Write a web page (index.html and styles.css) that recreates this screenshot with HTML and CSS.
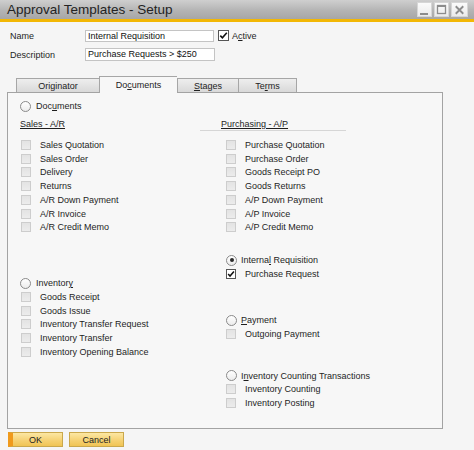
FILE: index.html
```html
<!DOCTYPE html>
<html>
<head>
<meta charset="utf-8">
<link rel="stylesheet" href="styles.css">
</head>
<body>
<div class="window">
  <div class="titlebar">
    <span class="title">Approval Templates - Setup</span>
    <div class="winbtns">
      <span class="wbtn"><svg width="13" height="12" viewBox="0 0 13 12"><rect x="2" y="9" width="8" height="2" fill="#8c8c8c"/></svg></span>
      <span class="wbtn"><svg width="13" height="12" viewBox="0 0 13 12"><rect x="2.5" y="1.5" width="8" height="8" fill="none" stroke="#8c8c8c" stroke-width="1.3"/><rect x="2" y="1" width="9" height="2" fill="#8c8c8c"/></svg></span>
      <span class="wbtn wclose"><svg width="16" height="12" viewBox="0 0 16 12"><path d="M4 2 L12 10 M12 2 L4 10" stroke="#8c8c8c" stroke-width="2"/></svg></span>
    </div>
  </div>

  <div class="form">
    <div class="field-row">
      <span class="label">Name</span>
      <div class="input input-name">Internal Requisition</div>
      <span class="chkbig"><svg width="9" height="9" viewBox="0 0 9 9"><path d="M1.3 4.6 L3.4 6.8 L7.8 1.8" fill="none" stroke="#111" stroke-width="1.6"/></svg></span>
      <span class="active-label">A<u>c</u>tive</span>
    </div>
    <div class="field-row desc-row">
      <span class="label">Description</span>
      <div class="input input-desc">Purchase Requests &gt; $250</div>
    </div>
  </div>

  <div class="tabs">
    <div class="tab tab-orig">Originator</div>
    <div class="tab tab-docs active">Do<u>c</u>uments</div>
    <div class="tab tab-stages"><u>S</u>tages</div>
    <div class="tab tab-terms">Te<u>r</u>ms</div>
  </div>

  <div class="panel">
    <div class="row radio-row">
      <span class="radio"></span><span>Doc<u>u</u>ments</span>
    </div>
    <div class="cols">
      <div class="col col-left">
        <div class="header"><u>Sales - A/R</u></div>
        <div class="list">
          <div class="row"><span class="chk"></span>Sales Quotation</div>
          <div class="row"><span class="chk"></span>Sales Order</div>
          <div class="row"><span class="chk"></span>Delivery</div>
          <div class="row"><span class="chk"></span>Returns</div>
          <div class="row"><span class="chk"></span>A/R Down Payment</div>
          <div class="row"><span class="chk"></span>A/R Invoice</div>
          <div class="row"><span class="chk"></span>A/R Credit Memo</div>
        </div>
        <div class="section sec-inventory">
          <div class="row radio-row"><span class="radio"></span><span>Inventor<u>y</u></span></div>
          <div class="row"><span class="chk"></span>Goods Receipt</div>
          <div class="row"><span class="chk"></span>Goods Issue</div>
          <div class="row"><span class="chk"></span>Inventory Transfer Request</div>
          <div class="row"><span class="chk"></span>Inventory Transfer</div>
          <div class="row"><span class="chk"></span>Inventory Opening Balance</div>
        </div>
      </div>
      <div class="col col-right">
        <div class="header header-line"><u>Purchasing - A/P</u></div>
        <div class="list">
          <div class="row"><span class="chk"></span>Purchase Quotation</div>
          <div class="row"><span class="chk"></span>Purchase Order</div>
          <div class="row"><span class="chk"></span>Goods Receipt PO</div>
          <div class="row"><span class="chk"></span>Goods Returns</div>
          <div class="row"><span class="chk"></span>A/P Down Payment</div>
          <div class="row"><span class="chk"></span>A/P Invoice</div>
          <div class="row"><span class="chk"></span>A/P Credit Memo</div>
        </div>
        <div class="section sec-ireq">
          <div class="row radio-row"><span class="radio selected"></span><span>Interna<u>l</u> Requisition</span></div>
          <div class="row"><span class="chk checked"><svg width="8" height="8" viewBox="0 0 9 9"><path d="M1.3 4.6 L3.4 6.8 L7.8 1.8" fill="none" stroke="#111" stroke-width="1.7"/></svg></span>Purchase Request</div>
        </div>
        <div class="section sec-pay">
          <div class="row radio-row"><span class="radio"></span><span><u>P</u>ayment</span></div>
          <div class="row"><span class="chk"></span>Outgoing Payment</div>
        </div>
        <div class="section sec-count">
          <div class="row radio-row"><span class="radio"></span><span>I<u>n</u>ventory Counting Transactions</span></div>
          <div class="row"><span class="chk"></span>Inventory Counting</div>
          <div class="row"><span class="chk"></span>Inventory Posting</div>
        </div>
      </div>
    </div>
  </div>

  <div class="buttons">
    <div class="btn btn-ok">OK</div>
    <div class="btn">Cancel</div>
  </div>
</div>
</body>
</html>
```

FILE: styles.css
```css
* { box-sizing: border-box; }
html, body { margin: 0; padding: 0; }
body {
  width: 474px;
  height: 450px;
  background: #f5f5f5;
  font-family: "Liberation Sans", Arial, sans-serif;
  font-size: 9px;
  color: #1e1e1e;
  overflow: hidden;
}
.window { width: 474px; height: 450px; display: flex; flex-direction: column; }

.titlebar {
  height: 22px;
  display: flex;
  align-items: flex-start;
  justify-content: space-between;
  background: linear-gradient(#cfcfcf, #b4b4b4 55%, #a6a6a6);
  border-bottom: 3px solid #f2b705;
}
.title {
  font-size: 13.5px;
  color: #232323;
  padding-left: 7px;
  line-height: 19px;
}
.winbtns { display: flex; gap: 2px; padding: 2px 6px 0 0; }
.wbtn {
  width: 15px;
  height: 15px;
  background: linear-gradient(#fbfbfb, #ebebeb);
  border: 1px solid #d6d6d6;
  display: flex;
  align-items: center;
  justify-content: center;
}
.wclose { width: 17px; }

.form { padding: 7px 0 0 10px; display: flex; flex-direction: column; }
.field-row { display: flex; align-items: center; height: 13px; }
.desc-row { margin-top: 6px; }
.label { width: 75px; }
.input {
  height: 13px;
  background: #ffffff;
  border: 1px solid #c4c4c4;
  padding-left: 2px;
  line-height: 11px;
  color: #111;
}
.input-name { width: 129px; height: 12px; line-height: 10px; }
.input-desc { width: 130px; }
.chkbig {
  width: 11px;
  height: 11px;
  margin-left: 4px;
  background: #fff;
  border: 1px solid #555;
  display: flex;
  align-items: center;
  justify-content: center;
}
.active-label { margin-left: 3px; }

.tabs {
  display: flex;
  align-items: flex-end;
  padding-left: 16px;
  margin-top: 15px;
  height: 16px;
  position: relative;
  z-index: 1;
}
.tab {
  height: 14px;
  border: 1px solid #a6a6a6;
  border-bottom: none;
  border-right: none;
  background: linear-gradient(#eeeeee, #d9d9d9);
  display: flex;
  align-items: center;
  justify-content: center;
  color: #222;
}
.tab-orig { width: 83px; }
.tab-docs { width: 78px; }
.tab-stages { width: 61px; }
.tab-terms { width: 59px; border-right: 1px solid #a6a6a6; }
.tab.active {
  height: 17px;
  margin-bottom: -1px;
  background: #f7f7f7;
  padding-bottom: 1px;
}

.panel {
  margin-left: 7px;
  width: 436px;
  height: 337px;
  border: 1px solid #a3a3a3;
  background: #f7f7f7;
  padding: 6px 0 0 12px;
}

.row {
  display: flex;
  align-items: center;
  height: 13.75px;
  white-space: nowrap;
}
.radio-row { height: 14px; }
.radio {
  width: 11px;
  height: 11px;
  border-radius: 50%;
  border: 1px solid #8a8a8a;
  background: linear-gradient(#ffffff, #ececec);
  margin-right: 5px;
  display: flex;
  align-items: center;
  justify-content: center;
  flex: none;
}
.radio.selected::after {
  content: "";
  width: 4px;
  height: 4px;
  border-radius: 50%;
  background: #2a2a2a;
}
.chk {
  width: 10px;
  height: 10px;
  border: 1px solid #cdcdcd;
  background: linear-gradient(#e3e3e3, #ececec);
  margin-right: 9px;
  flex: none;
}
.chk.checked {
  background: #fff;
  border-color: #555;
  display: flex;
  align-items: center;
  justify-content: center;
}

.cols { display: flex; margin-top: 5px; }
.col { display: flex; flex-direction: column; }
.col-left { width: 180px; }
.col-left .list .row { padding-left: 1px; }
.col-left .sec-inventory .row { padding-left: 1px; }
.col-left .sec-inventory .radio-row { padding-left: 0; }
.header {
  height: 13px;
  line-height: 12px;
  border-bottom: 1px solid transparent;
}
.header-line {
  width: 146px;
  padding-left: 21px;
  border-bottom-color: #d6d6d6;
}
.list { margin-top: 7.1px; display: flex; flex-direction: column; }
.col-right .list, .col-right .section { padding-left: 26px; }
.col-right .radio { margin-right: 4px; }
.section { display: flex; flex-direction: column; }
.sec-inventory { margin-top: 41.75px; }
.sec-ireq { margin-top: 18.75px; }
.sec-pay { margin-top: 32.5px; }
.sec-count { margin-top: 27.5px; }

.buttons { display: flex; gap: 6px; padding: 3px 0 0 8px; }
.btn {
  width: 55px;
  height: 15px;
  border: 1px solid #caa84c;
  background: linear-gradient(#fce7a4, #f5d070 60%, #f0c455);
  display: flex;
  align-items: center;
  justify-content: center;
  color: #222;
}
.btn-ok {
  border-left: 5px solid #f09a1c;
  padding-right: 4px;
}
```
